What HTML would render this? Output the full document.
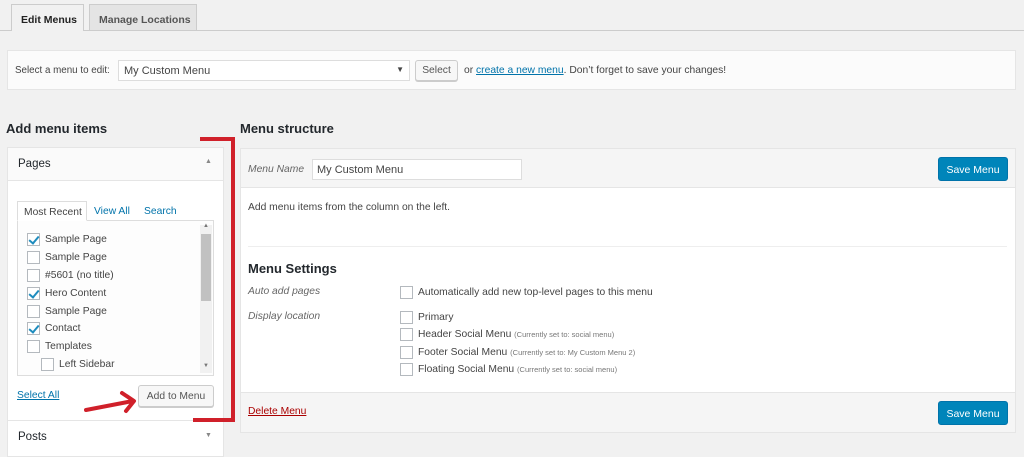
<!DOCTYPE html>
<html><head><style>
*{margin:0;padding:0;box-sizing:border-box}
body{width:1024px;height:451px;overflow:hidden;background:#f1f1f1;font-family:"Liberation Sans",sans-serif;font-size:10.3px;color:#444;position:relative}
.a{position:absolute;white-space:nowrap}
.cb{position:absolute;width:13px;height:13px;border:1px solid #b4b9be;background:#fff}
.ck::after{content:"";position:absolute;left:3px;top:0px;width:4px;height:8px;border:solid #1e8cbe;border-width:0 2px 2px 0;transform:rotate(40deg)}
.btn{position:absolute;background:#f7f7f7;border:1px solid #ccc;border-radius:3px;color:#555;text-align:center;box-shadow:0 1px 0 #ccc;white-space:nowrap}
.pri{position:absolute;background:#0085ba;border:1px solid #0073aa;border-radius:3px;color:#fff;text-align:center;font-size:10.5px;white-space:nowrap}
.lnk{color:#0073aa;text-decoration:underline}
h3{position:absolute;font-size:13px;font-weight:bold;color:#23282d;white-space:nowrap}
.it{font-style:italic;color:#666}
.sm{font-size:7.5px;color:#777}
</style></head><body>
<div class="a" style="left:0;top:30px;width:1024px;height:1px;background:#ccc"></div>
<div class="a" style="left:11px;top:4px;width:73px;height:27px;border:1px solid #ccc;border-bottom:none;background:#f1f1f1;font-weight:bold;color:#222;font-size:10.5px;padding:9px 0 0 9px">Edit Menus</div>
<div class="a" style="left:89px;top:4px;width:108px;height:26px;border:1px solid #ccc;border-bottom:none;background:#e4e4e4;font-weight:bold;color:#555;font-size:10.5px;padding:9px 0 0 9px">Manage Locations</div>

<div class="a" style="left:7px;top:50px;width:1009px;height:40px;background:#fbfbfb;border:1px solid #e5e5e5"></div>
<div class="a" style="left:15px;top:65px;font-size:9.8px">Select a menu to edit:</div>
<div class="a" style="left:118px;top:60px;width:292px;height:21px;background:#fff;border:1px solid #ddd;padding:4px 0 0 5px;font-size:11px">My Custom Menu<span class="a" style="right:5px;top:4px;font-size:8px">▼</span></div>
<div class="btn" style="left:415px;top:60px;width:43px;height:21px;padding-top:4px">Select</div>
<div class="a" style="left:464px;top:65px">or <span class="lnk">create a new menu</span>. Don’t forget to save your changes!</div>

<h3 style="left:6px;top:121px">Add menu items</h3>
<h3 style="left:240px;top:121px">Menu structure</h3>

<div class="a" style="left:7px;top:147px;width:217px;height:310px;background:#fff;border:1px solid #e5e5e5"></div>
<div class="a" style="left:8px;top:148px;width:215px;height:33px;background:#fafafa;border-bottom:1px solid #e5e5e5"></div>
<div class="a" style="left:18px;top:158px;font-size:11.5px;color:#23282d">Pages</div>
<div class="a" style="left:205px;top:158px;font-size:7px;color:#888">▲</div>
<div class="a" style="left:17px;top:201px;width:70px;height:20px;border:1px solid #ddd;border-bottom:1px solid #fff;background:#fff;padding:5px 0 0 6px;z-index:2">Most Recent</div>
<div class="a" style="left:94px;top:206px;color:#0073aa">View All</div>
<div class="a" style="left:144px;top:206px;color:#0073aa">Search</div>
<div class="a" style="left:17px;top:220px;width:197px;height:156px;border:1px solid #ddd;background:#fdfdfd"></div>
<div class="a" style="left:200px;top:225px;width:12px;height:148px;background:#f1f1f1"></div>
<div class="a" style="left:201px;top:234px;width:10px;height:67px;background:#c1c1c1"></div>
<div class="a" style="left:203px;top:223px;font-size:6px;color:#777">▲</div>
<div class="a" style="left:203px;top:363px;font-size:6px;color:#777">▼</div>

<div class="cb ck" style="left:27px;top:233px"></div><div class="a" style="left:45px;top:234px">Sample Page</div>
<div class="cb" style="left:27px;top:251px"></div><div class="a" style="left:45px;top:252px">Sample Page</div>
<div class="cb" style="left:27px;top:269px"></div><div class="a" style="left:45px;top:270px">#5601 (no title)</div>
<div class="cb ck" style="left:27px;top:287px"></div><div class="a" style="left:45px;top:288px">Hero Content</div>
<div class="cb" style="left:27px;top:305px"></div><div class="a" style="left:45px;top:306px">Sample Page</div>
<div class="cb ck" style="left:27px;top:322px"></div><div class="a" style="left:45px;top:323px">Contact</div>
<div class="cb" style="left:27px;top:340px"></div><div class="a" style="left:45px;top:341px">Templates</div>
<div class="cb" style="left:41px;top:358px"></div><div class="a" style="left:59px;top:359px">Left Sidebar</div>

<div class="a lnk" style="left:17px;top:390px">Select All</div>
<div class="btn" style="left:138px;top:385px;width:76px;height:22px;padding-top:5px">Add to Menu</div>
<div class="a" style="left:8px;top:420px;width:215px;height:1px;background:#e5e5e5"></div>
<div class="a" style="left:18px;top:431px;font-size:11.5px;color:#23282d">Posts</div>
<div class="a" style="left:205px;top:432px;font-size:7px;color:#888">▼</div>

<div class="a" style="left:240px;top:148px;width:776px;height:285px;background:#fff;border:1px solid #e5e5e5"></div>
<div class="a" style="left:241px;top:149px;width:774px;height:39px;background:#f5f5f5;border-bottom:1px solid #e5e5e5"></div>
<div class="a it" style="left:248px;top:164px">Menu Name</div>
<div class="a" style="left:312px;top:159px;width:210px;height:21px;background:#fff;border:1px solid #ddd;padding:4px 0 0 4px;font-size:11px">My Custom Menu</div>
<div class="pri" style="left:938px;top:157px;width:70px;height:24px;padding-top:6px">Save Menu</div>
<div class="a" style="left:248px;top:202px">Add menu items from the column on the left.</div>
<div class="a" style="left:248px;top:246px;width:759px;height:1px;background:#eee"></div>
<div class="a" style="left:248px;top:261px;font-size:13px;font-weight:bold;color:#23282d">Menu Settings</div>
<div class="a it" style="left:248px;top:286px">Auto add pages</div>
<div class="a it" style="left:248px;top:311px">Display location</div>
<div class="cb" style="left:400px;top:286px"></div><div class="a" style="left:418px;top:287px">Automatically add new top-level pages to this menu</div>
<div class="cb" style="left:400px;top:311px"></div><div class="a" style="left:418px;top:312px">Primary</div>
<div class="cb" style="left:400px;top:328px"></div><div class="a" style="left:418px;top:329px">Header Social Menu <span class="sm">(Currently set to: social menu)</span></div>
<div class="cb" style="left:400px;top:346px"></div><div class="a" style="left:418px;top:347px">Footer Social Menu <span class="sm">(Currently set to: My Custom Menu 2)</span></div>
<div class="cb" style="left:400px;top:363px"></div><div class="a" style="left:418px;top:364px">Floating Social Menu <span class="sm">(Currently set to: social menu)</span></div>
<div class="a" style="left:241px;top:392px;width:774px;height:40px;background:#f5f5f5;border-top:1px solid #e5e5e5"></div>
<div class="a" style="left:248px;top:406px;color:#a00;text-decoration:underline">Delete Menu</div>
<div class="pri" style="left:938px;top:401px;width:70px;height:24px;padding-top:6px">Save Menu</div>

<svg class="a" style="left:0;top:0" width="1024" height="451">
<path d="M200 139 H233 V420 H193" fill="none" stroke="#d0202a" stroke-width="4"/>
<path d="M86 410 L133 401 M122 393 L134 401 L126 411" fill="none" stroke="#d0202a" stroke-width="4" stroke-linecap="round" stroke-linejoin="round"/>
</svg>
</body></html>
